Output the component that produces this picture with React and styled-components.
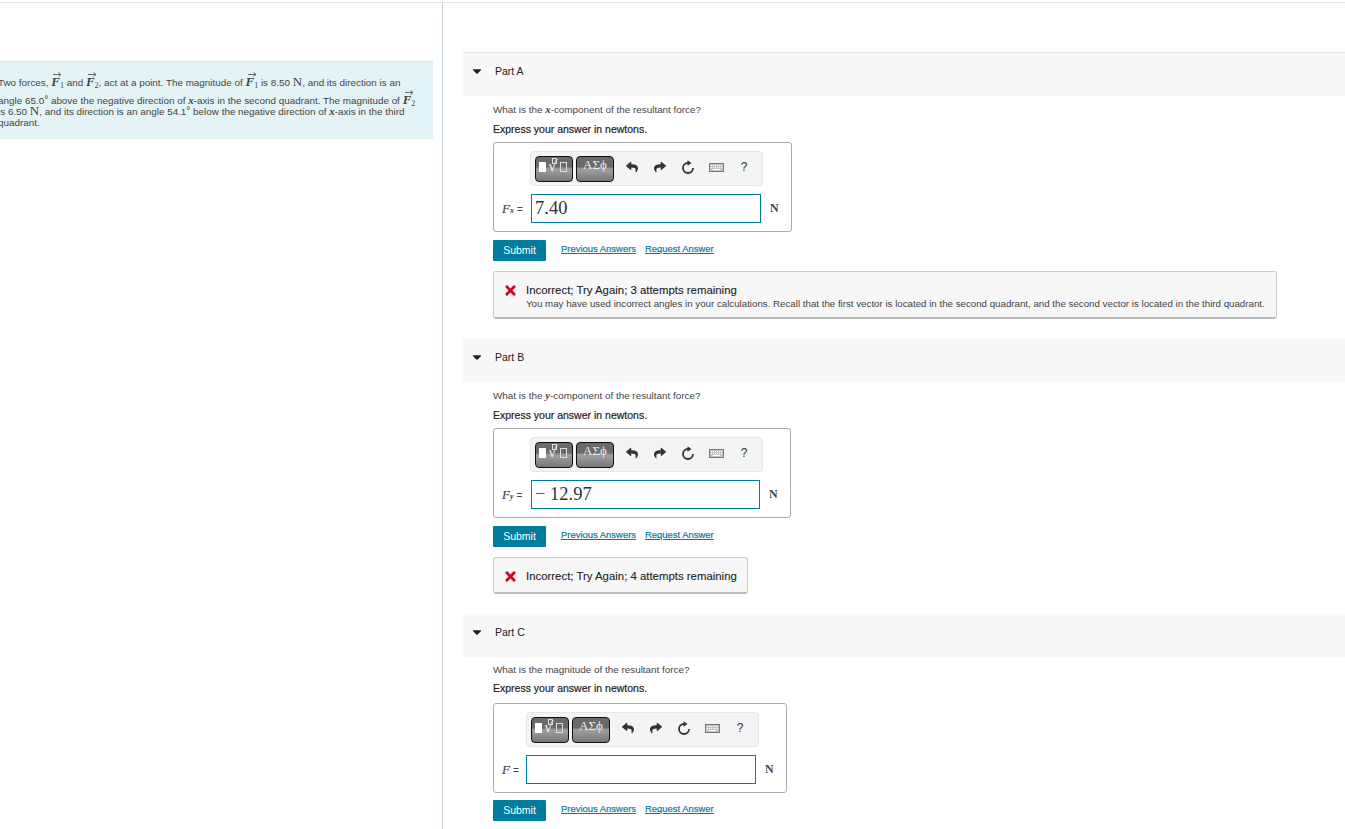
import { FaReply, FaShare, FaTimes, FaCaretDown } from 'react-icons/fa'
import styled, { createGlobalStyle } from 'styled-components'

const GlobalStyle = createGlobalStyle`
  html, body {
    margin: 0;
    padding: 0;
    background: #fff;
    overflow: hidden;
  }
  * {
    box-sizing: border-box;
  }
`

const Keyboard = () => (
  <svg width="15" height="9" viewBox="0 0 15 9">
    <rect x="0.5" y="0.5" width="14" height="8" fill="#c4c4c4" stroke="#777" />
    <path
      d="M2 2.5h11M2 4.5h11"
      stroke="#fff"
      strokeWidth="1"
      strokeDasharray="1 1"
    />
    <path d="M4 6.5h7" stroke="#fff" strokeWidth="1" />
  </svg>
)

const Reload = () => (
  <svg width="14" height="14" viewBox="0 0 14 14">
    <path d="M12 8A5 5 0 1 1 7 3" fill="none" stroke="#333" strokeWidth="1.8" />
    <path d="M6.5 0.2v5.6L10.5 3z" fill="#333" />
  </svg>
)

const Arrow = () => (
  <VectorArrow width="9" height="5" viewBox="0 0 9 5">
    <path d="M0 2.5h7.5M5.5 0.5L8 2.5 5.5 4.5" fill="none" stroke="#444" strokeWidth="0.8" />
  </VectorArrow>
)

const Vector = ({ sub }) => (
  <VectorWrap>
    <Arrow />
    <MathVar>F</MathVar>
    <MathSub>{sub}</MathSub>
  </VectorWrap>
)

const Toolbar = ({ offset }) => (
  <ToolbarWrap $offset={offset}>
    <TemplateButton>
      <WhiteSquare />
      <RootGlyph>
        <SmallBox />√
      </RootGlyph>
      <HollowSquare />
    </TemplateButton>
    <TemplateButton>
      <GreekGlyph>ΑΣϕ</GreekGlyph>
    </TemplateButton>
    <ToolIcons>
      <ToolIcon><FaReply size={12} /></ToolIcon>
      <ToolIcon><FaShare size={12} /></ToolIcon>
      <ToolIcon><Reload /></ToolIcon>
      <ToolIcon><Keyboard /></ToolIcon>
      <ToolIcon>?</ToolIcon>
    </ToolIcons>
  </ToolbarWrap>
)

const Part = ({ part }) => (
  <PartSection>
    <PartHeader $height={part.height}>
      <Caret><FaCaretDown size={14} /></Caret>
      <PartTitle>{part.name}</PartTitle>
    </PartHeader>
    <PartBody>
      <Question>{part.question}</Question>
      <Instruction $gap={part.instructionGap}>Express your answer in newtons.</Instruction>
      <AnswerBox $width={part.boxWidth} $gap={part.boxGap}>
        <Toolbar offset={part.toolbarOffset} />
        <AnswerRow>
          <AnswerLabel $width={part.labelWidth}>
            <LabelVar>F</LabelVar>
            {part.label && <LabelSub>{part.label}</LabelSub>}
            <Equals>=</Equals>
          </AnswerLabel>
          <AnswerInput $width={part.inputWidth}>{part.value}</AnswerInput>
          <Unit>N</Unit>
        </AnswerRow>
      </AnswerBox>
      <Actions $gap={part.actionsGap}>
        <SubmitButton>Submit</SubmitButton>
        <ActionLink>Previous Answers</ActionLink>
        <ActionLink>Request Answer</ActionLink>
      </Actions>
      {part.feedback && (
        <Feedback $width={part.feedback.width} $tall={!!part.feedback.hint}>
          <FeedbackIcon $tall={!!part.feedback.hint}><FaTimes size={15} /></FeedbackIcon>
          <div>
            <FeedbackTitle>{part.feedback.title}</FeedbackTitle>
            {part.feedback.hint && <FeedbackHint>{part.feedback.hint}</FeedbackHint>}
          </div>
        </Feedback>
      )}
    </PartBody>
  </PartSection>
)

export default function App() {
  return (
    <Page>
      <GlobalStyle />
      <LeftColumn>
        <Intro>
          <IntroLine $height={24}>
            Two forces, <Vector sub="1" /> and <Vector sub="2" />, act at a point. The magnitude of{' '}
            <Vector sub="1" /> is 8.50 <InlineUnit>N</InlineUnit>, and its direction is an
          </IntroLine>
          <IntroLine $height={12}>
            angle 65.0<Degree>°</Degree> above the negative direction of <MathX>x</MathX>-axis in the second
            quadrant. The magnitude of <Vector sub="2" />
          </IntroLine>
          <IntroLine $height={10}>
            is 6.50 <InlineUnit>N</InlineUnit>, and its direction is an angle 54.1<Degree>°</Degree> below
            the negative direction of <MathX>x</MathX>-axis in the third
          </IntroLine>
          <IntroLine $height={14}>quadrant.</IntroLine>
        </Intro>
      </LeftColumn>
      <RightColumn>
        {getParts().map(part => (
          <Part part={part} key={part.name} />
        ))}
      </RightColumn>
    </Page>
  )
}

const getParts = () => [
  {
    name: 'Part A',
    height: 44,
    question: <>What is the <MathX>x</MathX>-component of the resultant force?</>,
    label: 'x',
    value: '7.40',
    boxWidth: 299,
    instructionGap: 7,
    boxGap: 7,
    actionsGap: 8,
    labelWidth: 37,
    toolbarOffset: 36,
    inputWidth: 230,
    feedback: {
      title: 'Incorrect; Try Again; 3 attempts remaining',
      hint: 'You may have used incorrect angles in your calculations. Recall that the first vector is located in the second quadrant, and the second vector is located in the third quadrant.',
      width: 784
    }
  },
  {
    name: 'Part B',
    height: 43,
    question: <>What is the <MathX>y</MathX>-component of the resultant force?</>,
    label: 'y',
    value: '− 12.97',
    boxWidth: 298,
    instructionGap: 7,
    boxGap: 7,
    actionsGap: 8,
    labelWidth: 37,
    toolbarOffset: 36,
    inputWidth: 229,
    feedback: { title: 'Incorrect; Try Again; 4 attempts remaining', width: 255 }
  },
  {
    name: 'Part C',
    height: 43,
    question: <>What is the magnitude of the resultant force?</>,
    label: '',
    value: '',
    boxWidth: 294,
    instructionGap: 6,
    boxGap: 9,
    actionsGap: 7,
    labelWidth: 32,
    toolbarOffset: 32,
    inputWidth: 230
  }
]

const Page = styled.div`
  display: flex;
  width: 1345px;
  height: 829px;
  margin-top: 2px;
  border-top: 1px solid #e4e4e4;
  overflow: hidden;
  font-family: 'Liberation Sans', Arial, sans-serif;
  color: #444;
`

const LeftColumn = styled.div`
  width: 443px;
  flex-shrink: 0;
  padding: 58px 9px 0 0;
  border-right: 1px solid #c5d3e5;
`

const Intro = styled.div`
  height: 78px;
  padding: 8px 0 0 0;
  background: #e4f4f6;
  border-top: 1px solid #dce6ea;
  font-size: 9.9px;
  overflow: hidden;
`

const IntroLine = styled.div`
  height: ${({ $height }) => $height}px;
  line-height: ${({ $height }) => $height}px;
  margin-left: -2px;
  white-space: nowrap;
`

const VectorWrap = styled.span`
  position: relative;
  display: inline-block;
  line-height: 11px;
`

const VectorArrow = styled.svg`
  position: absolute;
  left: 2px;
  top: -4px;
`

const MathVar = styled.span`
  font-family: 'Liberation Serif', serif;
  font-style: italic;
  font-weight: 700;
  font-size: 13px;
`

const MathSub = styled.sub`
  font-family: 'Liberation Serif', serif;
  font-size: 8px;
  line-height: 0;
  vertical-align: -2px;
`

const MathX = styled.span`
  font-family: 'Liberation Serif', serif;
  font-style: italic;
  font-weight: 700;
  font-size: 11px;
`

const Degree = styled.span`
  font-size: 10px;
  vertical-align: 1px;
  line-height: 0;
`

const RightColumn = styled.div`
  flex: 1;
  padding: 49px 0 0 20px;
`

const PartSection = styled.section`
  margin-bottom: 20px;

  &:first-child > div:first-child {
    border-top: 1px solid #e4e4e4;
  }
`

const PartHeader = styled.div`
  display: flex;
  align-items: center;
  height: ${({ $height }) => $height}px;
  padding-left: 7px;
  background: #f8f8f8;
`

const Caret = styled.span`
  display: flex;
  width: 25px;
  color: #222;
  margin-top: -7px;
`

const PartTitle = styled.span`
  font-size: 10.5px;
  color: #222;
  margin-top: -8px;
`

const PartBody = styled.div`
  padding: 7px 0 0 30px;
`

const Question = styled.div`
  font-size: 9.9px;
  line-height: 12px;
  color: #444;
`

const Instruction = styled.div`
  margin-top: ${({ $gap }) => $gap}px;
  font-size: 10.5px;
  line-height: 12px;
  color: #222;
  -webkit-text-stroke: 0.2px #222;
`

const AnswerBox = styled.div`
  width: ${({ $width }) => $width}px;
  height: 90px;
  margin-top: ${({ $gap }) => $gap}px;
  padding-top: 8px;
  border: 1px solid #aaa;
  border-radius: 3px;
`

const ToolbarWrap = styled.div`
  display: flex;
  align-items: center;
  width: 233px;
  height: 35px;
  margin-left: ${({ $offset }) => $offset}px;
  padding-left: 4px;
  gap: 3px;
  background: #f4f4f4;
  border: 1px solid #e6e6e6;
  border-radius: 4px;
`

const TemplateButton = styled.div`
  position: relative;
  display: flex;
  align-items: flex-start;
  justify-content: center;
  width: 38px;
  height: 26px;
  background: linear-gradient(#6a6a6a 0 40%, #a0a0a0 50%, #777 100%);
  border: 1px solid #111;
  border-radius: 4px;
  color: #eee;
`

const WhiteSquare = styled.span`
  position: absolute;
  left: 3px;
  top: 5px;
  width: 7px;
  height: 10px;
  background: #fff;
`

const HollowSquare = styled.span`
  position: absolute;
  left: 24px;
  top: 5px;
  width: 7px;
  height: 10px;
  border: 1px solid #ddd;
`

const RootGlyph = styled.span`
  position: absolute;
  left: 12px;
  top: 1px;
  font-family: 'DejaVu Sans', sans-serif;
  font-size: 15px;
  line-height: 16px;
`

const SmallBox = styled.span`
  position: absolute;
  left: 4px;
  top: 0;
  width: 5px;
  height: 6px;
  border: 1px solid #ddd;
`

const GreekGlyph = styled.span`
  font-family: 'Liberation Serif', serif;
  font-size: 13px;
  line-height: 15px;
  white-space: nowrap;
`

const ToolIcons = styled.div`
  display: flex;
  flex: 1;
  align-items: center;
  padding-left: 1px;
  margin-top: -3px;
`

const ToolIcon = styled.span`
  display: flex;
  justify-content: center;
  width: 28px;
  color: #333;
  font-size: 12px;
`

const AnswerRow = styled.div`
  display: flex;
  align-items: center;
  margin-top: 8px;
`

const AnswerLabel = styled.div`
  display: flex;
  align-items: baseline;
  justify-content: flex-start;
  width: ${({ $width }) => $width}px;
  padding-left: 8px;
`

const LabelVar = styled.span`
  font-family: 'Liberation Serif', serif;
  font-style: italic;
  font-size: 13px;
  -webkit-text-stroke: 0.2px #444;
`

const LabelSub = styled.sub`
  font-family: 'Liberation Serif', serif;
  font-style: italic;
  font-weight: 700;
  font-size: 8px;
  line-height: 0;
`

const Equals = styled.span`
  margin-left: 3px;
  font-size: 10px;
`

const AnswerInput = styled.div`
  width: ${({ $width }) => $width}px;
  height: 29px;
  padding-left: 3px;
  border: 1px solid #007c9c;
  font-family: 'Liberation Serif', serif;
  font-size: 18.5px;
  line-height: 27px;
  color: #333;
`

const Unit = styled.span`
  margin-left: 9px;
  font-family: 'Liberation Serif', serif;
  font-size: 12px;
  font-weight: 700;
`

const InlineUnit = styled.span`
  font-family: 'Liberation Serif', serif;
  font-size: 13px;
`

const Actions = styled.div`
  display: flex;
  align-items: center;
  gap: 9px;
  margin-top: ${({ $gap }) => $gap}px;
`

const SubmitButton = styled.button`
  width: 53px;
  height: 21px;
  margin-right: 6px;
  padding: 0 0 2px;
  border: 0;
  border-radius: 1px;
  background: #007c9c;
  color: #fff;
  font-family: inherit;
  font-size: 10.5px;
`

const ActionLink = styled.a`
  color: #007c9c;
  font-size: 9.45px;
  margin-top: -4px;
  text-decoration: underline;
  -webkit-text-stroke: 0.2px #007c9c;
`

const Feedback = styled.div`
  display: flex;
  align-items: center;
  width: ${({ $width }) => $width}px;
  height: ${({ $tall }) => ($tall ? 48 : 37)}px;
  margin-top: 10px;
  padding: ${({ $tall }) => ($tall ? 4 : 2)}px 8px 0 9px;
  background: #f7f7f7;
  border: 1px solid #ccc;
  border-bottom: 2px solid #bbb;
  border-radius: 3px;
`

const FeedbackIcon = styled.span`
  display: flex;
  width: 23px;
  margin-top: ${({ $tall }) => ($tall ? -12 : 0)}px;
  color: #d8002a;
`

const FeedbackTitle = styled.div`
  font-size: 11.4px;
  line-height: 12px;
  color: #222;
  -webkit-text-stroke: 0.1px #222;
`

const FeedbackHint = styled.div`
  margin-top: 2px;
  font-size: 9.72px;
  line-height: 11px;
  color: #444;
  white-space: nowrap;
`
